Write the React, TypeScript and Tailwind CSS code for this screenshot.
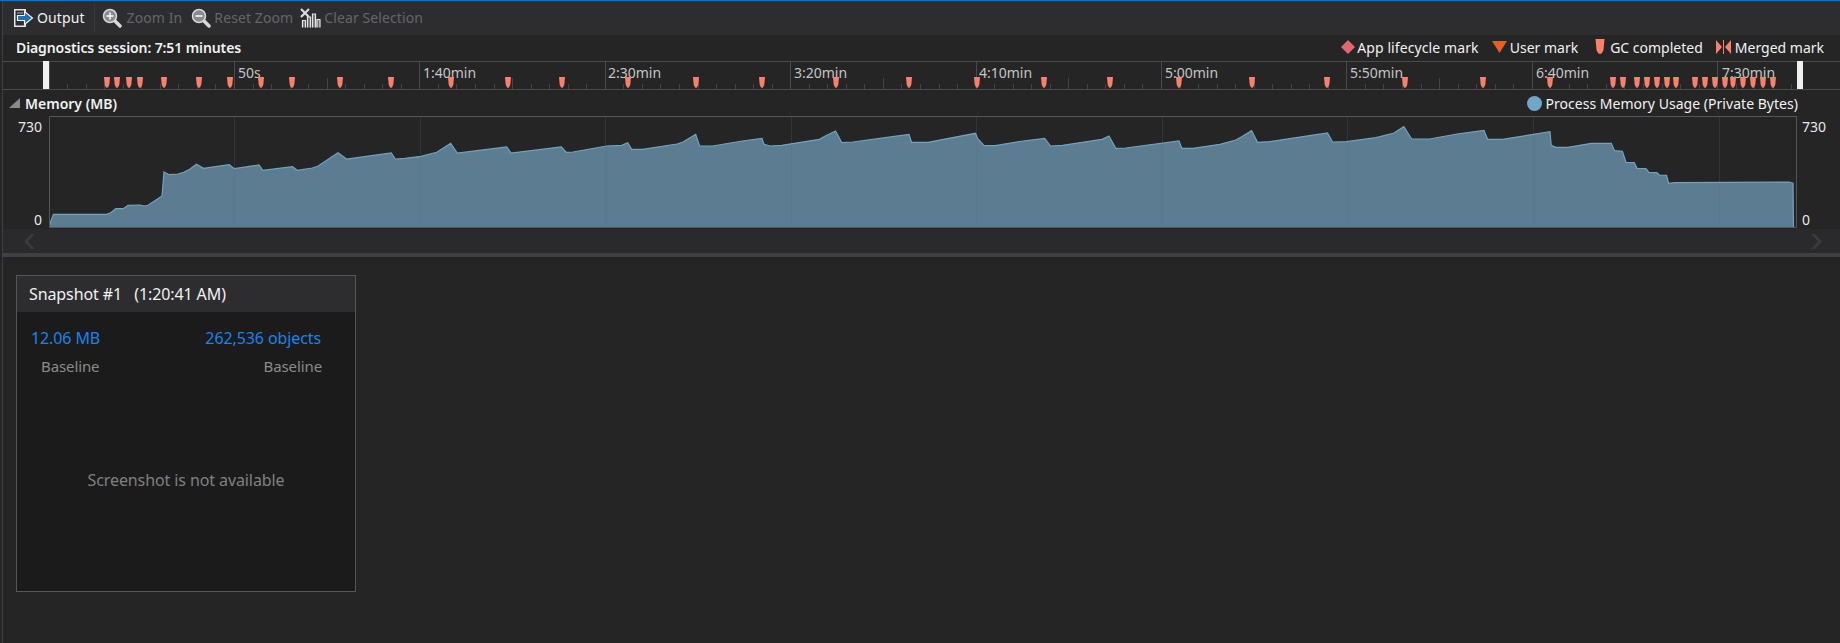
const CHART_POINTS =
  "48.6,227.3 53.4,214.3 106.7,214.3 110.7,212.7 115.8,208.7 123.3,208.7 128,205.3 140,205 144.3,206 148,205.3 162,196 164,172 169.2,174.7 177.9,174 183.8,172.3 189.7,169.3 196.4,164.3 203.6,168.3 229.2,164.7 234.4,168.7 258.9,165 262.8,170.3 292.5,166.7 297.2,170.3 312.3,168 318.2,166 338,152.7 346.6,159 391.3,153 395.3,159 405,158.3 421,156.3 436.8,152.3 450.6,143.3 457.3,153 506.7,147 511,153 561.3,147 566.4,152.3 573,152 606.7,146 621.7,145.3 627.7,142.7 631.6,149.3 642.7,149.3 677,144 683,142 695.7,134.3 699.6,146 712.6,146 742.3,141 762,138.3 764,144.3 770,146 781.8,145.3 819.4,139.3 825.3,136 835.6,131 841.9,142.7 853,142 892.5,136.7 909,134.3 911.5,142.3 928,142.3 975.5,133.3 977.5,138.3 984.2,145.7 995.3,145.7 1023,141 1044.7,138.3 1050.6,146 1062.5,145.3 1102,139.3 1109,136 1115.8,148.3 1125.7,148 1179,141 1181.8,148.3 1192.9,148.3 1220,144.3 1235.8,140 1241.7,136.7 1251.6,130.7 1257.5,142.3 1269.4,141.7 1303,136.7 1327.5,133 1332.6,142 1346.5,141.7 1376,137.7 1394,133 1403.8,126.7 1411.7,139 1429.5,139 1457,134 1484,130.3 1487.6,139.3 1502.6,139.3 1550,131.7 1551.2,145.3 1556,147.3 1567.8,147.3 1591.5,143.3 1611.3,143.3 1614.5,150.7 1622.4,151.3 1626,162.3 1634.2,162.7 1637,168.3 1646,168.7 1648.9,172.3 1656.8,172.7 1659.5,175 1666.6,175.3 1668.6,183.3 1674.5,182.7 1789,182 1793,183.3 1793.5,227.3";

const GRID_LINES = [234, 420, 605, 791, 976, 1162, 1347, 1533, 1719];

const RULER_LABELS = [
  { x: 238, text: "50s" },
  { x: 423, text: "1:40min" },
  { x: 608, text: "2:30min" },
  { x: 794, text: "3:20min" },
  { x: 979, text: "4:10min" },
  { x: 1165, text: "5:00min" },
  { x: 1350, text: "5:50min" },
  { x: 1536, text: "6:40min" },
  { x: 1722, text: "7:30min" },
];

const GC_MARKS = [
  107, 117, 129, 140, 164, 199, 230, 261, 292, 340, 391, 451, 508, 562, 628, 696, 762, 836, 909, 977, 1044, 1110,
  1179, 1252, 1327, 1405, 1483, 1550, 1613, 1623, 1637, 1647, 1657, 1667, 1676, 1695, 1705, 1715, 1725, 1733, 1743,
  1753, 1763, 1773,
];

const TICKS = Array.from({ length: 95 }, (_, i) => i);

function OutputIcon() {
  return (
    <svg width="21" height="20" viewBox="0 0 21 20" className="shrink-0">
      <path d="M1 1h12v5h-1.500V2.500h-9v15h9V14H13v5H1z" fill="#e6e6e6" />
      <path d="M4 4h6v2H4z" fill="#6f6f72" />
      <path d="M4.500 7.500h7V3.500l8 6.500-8 6.500v-4h-7z" fill="#1c6fb8" stroke="#f0f0f0" strokeWidth="1.200" />
    </svg>
  );
}

function Magnifier({ sign }: { sign: "plus" | "minus" }) {
  return (
    <svg width="20" height="20" viewBox="0 0 20 20" className="shrink-0">
      <path d="M12.500 12.500l5.500 5.500" stroke="#d8d8d8" strokeWidth="3.500" strokeLinecap="round" />
      <circle cx="8" cy="8" r="6.500" fill="#8a8a8c" stroke="#d8d8d8" strokeWidth="1.500" />
      <path d="M4.500 8h7" stroke="#ececec" strokeWidth="1.800" />
      {sign === "plus" && <path d="M8 4.500v7" stroke="#ececec" strokeWidth="1.800" />}
    </svg>
  );
}

function ClearIcon() {
  return (
    <svg width="21" height="20" viewBox="0 0 21 20" className="shrink-0">
      <path d="M1 1l8 8M9 1L1 9" stroke="#dcdcdc" strokeWidth="2.200" />
      <path d="M2.500 19.500v-7h3v7M7.500 19.500V9h3v10.500M12.500 19.500V6h3v13.500M17 19.500v-8h3v8" fill="#6a6a6e" stroke="#e4e4e4" strokeWidth="1.200" />
    </svg>
  );
}

function GcMark({ x, y = 0 }: { x: number; y?: number }) {
  return <path transform={`translate(${x} ${y})`} d="M-3 0H3L2.300 7.500Q1.300 11 0 11T-2.300 7.500Z" fill="#fb806a" />;
}

export default function App() {
  return (
    <div className="w-[1840px] h-[643px] overflow-hidden flex flex-col bg-[#252526] text-[14px] text-[#f1f1f1] font-['Noto_Sans',sans-serif]">
      <div className="h-px bg-[#007acc] shrink-0" />
      <div className="flex flex-1 min-h-0 pl-[2px]">
        <div className="w-px bg-[#3f3f46] shrink-0" />
        <div className="flex-1 min-w-0 flex flex-col">
          {/* Toolbar */}
          <div className="h-[34px] shrink-0 bg-[#2d2d30] flex items-center pl-[10px]">
            <OutputIcon />
            <span className="ml-[3px] mb-[2px] tracking-[0.1px]">Output</span>
            <div className="w-px h-[28px] bg-[#3a3a3d] ml-[9px] mr-[7px]" />
            <Magnifier sign="plus" />
            <span className="ml-[5px] mb-[2px] text-[#656565] tracking-[0.1px]">Zoom In</span>
            <div className="ml-[9px]">
              <Magnifier sign="minus" />
            </div>
            <span className="ml-[3px] mb-[2px] text-[#656565] tracking-[0.1px]">Reset Zoom</span>
            <div className="ml-[7px]">
              <ClearIcon />
            </div>
            <span className="ml-[3px] mb-[2px] text-[#656565] tracking-[0.1px]">Clear Selection</span>
          </div>

          {/* Session row with legend */}
          <div className="h-[26px] shrink-0 flex items-center justify-between pl-[13px] pr-[16px] pb-[2px]">
            <span className="font-semibold tracking-[-0.1px]">Diagnostics session: 7:51 minutes</span>
            <div className="flex items-center">
              <svg width="14" height="14" viewBox="0 0 14 14">
                <path d="M7 0l7 7-7 7-7-7z" fill="#e0686e" />
              </svg>
              <span className="ml-[2px] tracking-[0.1px]">App lifecycle mark</span>
              <svg width="15" height="12" viewBox="0 0 15 12" className="ml-[13px]">
                <path d="M0 0h15L7.500 12z" fill="#e8601c" />
              </svg>
              <span className="ml-[3px]">User mark</span>
              <svg width="10" height="16" viewBox="-5 0 10 16" className="ml-[17px]">
                <path d="M-4.500 0H4.500L3.500 11Q2 15 0 15T-3.500 11Z" fill="#fb806a" />
              </svg>
              <span className="ml-[5px]">GC completed</span>
              <svg width="15" height="14" viewBox="0 0 15 14" className="ml-[13px]">
                <path d="M0 0l6 7-6 7zM15 0L9 7l6 7z" fill="#fb806a" />
                <path d="M7.500 0v14" stroke="#fb806a" strokeWidth="1" />
              </svg>
              <span className="ml-[4px]">Merged mark</span>
            </div>
          </div>

          {/* Ruler */}
          <div className="relative h-[29px] shrink-0 border-y border-[#4a4a4c]">
            {RULER_LABELS.map((l) => (
              <span
                key={l.text}
                className="absolute top-[1px] text-[#c4c4c4] leading-[20px]"
                style={{ left: l.x - 3 }}
              >
                {l.text}
              </span>
            ))}
            <svg className="absolute left-[-3px] top-[-1px]" width="1837" height="29" viewBox="0 61 1837 29">
              {TICKS.map((i) => {
                const x = Math.round(48.6 + i * 18.54) + 0.5;
                const y = i % 10 === 0 ? 61 : i % 5 === 0 ? 78 : 84;
                if (x > 1797) return null;
                return <line key={i} x1={x} x2={x} y1={y} y2={89} stroke={i % 10 === 0 ? "#4a4a4c" : "#444446"} />;
              })}
              {GC_MARKS.map((x) => (
                <GcMark key={x} x={x} y={77} />
              ))}
              <rect x="43" y="61" width="6" height="28" fill="#f0f0f0" />
              <rect x="1797" y="61" width="6" height="28" fill="#f0f0f0" />
            </svg>
          </div>

          {/* Memory header */}
          <div className="h-[26px] shrink-0 flex items-center justify-between pl-[6px] pr-[42px]">
            <div className="flex items-center">
              <svg width="11" height="10" viewBox="0 0 11 10">
                <path d="M11 0v10H0z" fill="#8a8a8a" />
              </svg>
              <span className="ml-[5px] mt-[1px] font-semibold">Memory (MB)</span>
            </div>
            <div className="flex items-center">
              <span className="w-[15px] h-[15px] rounded-full bg-[#6fa8c7]" />
              <span className="ml-[3px] tracking-[0.03px]">Process Memory Usage (Private Bytes)</span>
            </div>
          </div>

          {/* Chart */}
          <div className="h-[112px] shrink-0 flex">
            <div className="w-[46px] shrink-0 flex flex-col justify-between items-end pr-[7px] text-[#e8e8e8]">
              <span>730</span>
              <span className="-mb-[2px]">0</span>
            </div>
            <svg width="1749" height="112" viewBox="49 116 1749 112" className="shrink-0">
              <defs>
                <clipPath id="area">
                  <polygon points={CHART_POINTS} />
                </clipPath>
              </defs>
              {GRID_LINES.map((x) => (
                <line key={x} x1={x + 0.5} x2={x + 0.5} y1={117} y2={227} stroke="#343436" />
              ))}
              <polygon points={CHART_POINTS} fill="#5b7c91" />
              <g clipPath="url(#area)">
                {GRID_LINES.map((x) => (
                  <line key={x} x1={x + 0.5} x2={x + 0.5} y1={117} y2={227} stroke="#58788d" />
                ))}
              </g>
              <polyline points={CHART_POINTS} fill="none" stroke="#71a3bd" strokeWidth="1.200" />
              <path d="M49.500 227.500V116.500H1796.500V227.500Z" fill="none" stroke="#55555a" />
            </svg>
            <div className="flex-1 flex flex-col justify-between pl-[4px] text-[#e8e8e8]">
              <span>730</span>
              <span className="-mb-[2px]">0</span>
            </div>
          </div>

          {/* Scroll row */}
          <div className="h-[24px] shrink-0 bg-[#2a2a2c] flex items-center justify-between pl-[21px] pr-[18px] mt-[1px]">
            <svg width="14" height="15" viewBox="0 0 14 15">
              <path d="M11 0L4 7.500l7 7.500H7L0 7.500 7 0z" fill="#3a3a3d" />
            </svg>
            <svg width="14" height="15" viewBox="0 0 14 15">
              <path d="M3 0l7 7.500L3 15h4l7-7.500L7 0z" fill="#3a3a3d" />
            </svg>
          </div>
          <div className="h-[4px] shrink-0 bg-[#3f3f46]" />

          {/* Snapshot card */}
          <div className="flex-1 pl-[13px] pt-[18px]">
            <div className="w-[340px] h-[317px] border border-[#55555a] bg-[#1b1b1c] flex flex-col text-[16px] tracking-[-0.1px]">
              <div className="h-[36px] shrink-0 bg-[#2d2d30] flex items-center pl-[12px] whitespace-pre">
                Snapshot #1   (1:20:41 AM)
              </div>
              <div className="flex justify-between pl-[14px] pr-[34px] pt-[14px] text-[#1684ec]">
                <span>12.06 MB</span>
                <span>262,536 objects</span>
              </div>
              <div className="flex justify-between pl-[24px] pr-[33px] pt-[5px] text-[#8a8a8a] text-[15px]">
                <span>Baseline</span>
                <span>Baseline</span>
              </div>
              <div className="flex-1 flex items-center justify-center text-[#808080] pb-[8px]">
                Screenshot is not available
              </div>
            </div>
          </div>
        </div>
      </div>
    </div>
  );
}
